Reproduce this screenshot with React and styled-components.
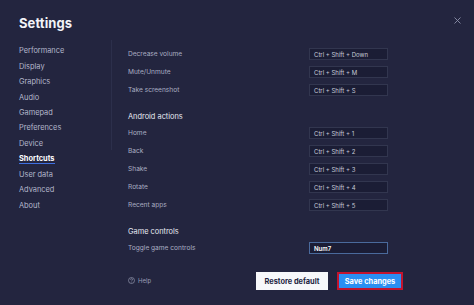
import React from "react";
import styled, { createGlobalStyle } from "styled-components";

const Global = createGlobalStyle`
  html, body { margin: 0; padding: 0; background: #23253f; }
  body { font-family: Inter, "Noto Sans", sans-serif; -webkit-font-smoothing: antialiased; }
`;

const Page = styled.div`
  width: 474px;
  height: 305px;
  background: #23253f;
  display: flex;
  flex-direction: column;
  overflow: hidden;
`;

const Header = styled.div`
  height: 40px;
  display: flex;
  align-items: center;
  justify-content: space-between;
  padding: 0 13px 0 19px;
  box-sizing: border-box;
`;

const Title = styled.h1`
  margin: 0;
  margin-top: 6px;
  font-size: 13px;
  font-weight: 700;
  color: #f2f3f8;
  letter-spacing: 0.1px;
`;

const Close = styled.button`
  background: none;
  border: 0;
  padding: 0;
  width: 8px;
  height: 8px;
  margin-top: 1px;
  display: flex;
  align-items: center;
  justify-content: center;
`;

const Body = styled.div`
  height: 232px;
  display: flex;
`;

const Sidebar = styled.nav`
  width: 111px;
  box-sizing: border-box;
  padding: 3px 0 0 19px;
  display: flex;
  flex-direction: column;
`;

const NavItem = styled.div`
  height: 15.45px;
  display: flex;
  align-items: center;
  font-size: 7.4px;
  color: ${(p) => (p.$active ? "#ffffff" : "#b4b8cc")};
  font-weight: ${(p) => (p.$active ? 700 : 400)};
`;

const NavLabel = styled.span`
  position: relative;
  padding-bottom: ${(p) => (p.$active ? "0" : "0")};
  border-bottom: ${(p) => (p.$active ? "1px solid #3f6fe0" : "none")};
  line-height: 9px;
`;

const Track = styled.div`
  width: 1px;
  height: 110px;
  background: #2c2f4b;
  align-self: flex-start;
`;

const Content = styled.div`
  width: 260px;
  padding: 5px 0 0 16px;
  display: flex;
  flex-direction: column;
`;

const Row = styled.div`
  height: 18px;
  display: flex;
  align-items: center;
  justify-content: space-between;
`;

const Label = styled.span`
  font-size: 6.6px;
  color: #a9adc2;
`;

const Heading = styled.div`
  height: 16px;
  margin-top: 9px;
  display: flex;
  align-items: center;
  font-size: 7.4px;
  color: #e8eaf2;
`;

const KeyBox = styled.div`
  width: 79px;
  height: 12px;
  box-sizing: border-box;
  border: 1px solid ${(p) => (p.$focus ? "#4a6a9c" : "#32364f")};
  background: #1b1d35;
  display: flex;
  align-items: center;
  padding-left: 4px;
  font-size: 6px;
  color: ${(p) => (p.$focus ? "#ffffff" : "#c7cad8")};
  font-weight: ${(p) => (p.$focus ? 600 : 400)};
`;

const Footer = styled.div`
  height: 18px;
  display: flex;
  align-items: center;
  padding: 0 71px 0 128px;
`;

const Help = styled.div`
  display: flex;
  align-items: center;
  gap: 3px;
  font-size: 6px;
  color: #9a9fb6;
  margin-top: -2px;
`;

const Buttons = styled.div`
  margin-left: auto;
  display: flex;
  gap: 9px;
`;

const Button = styled.button`
  height: 18px;
  box-sizing: border-box;
  border: ${(p) => (p.$primary ? "2px solid #c2142e" : "0")};
  background: ${(p) => (p.$primary ? "#2a8ff2" : "#f7f8fa")};
  color: ${(p) => (p.$primary ? "#ffffff" : "#23253f")};
  font-family: Inter, sans-serif;
  font-weight: 700;
  font-size: 7.4px;
  padding: 0;
  width: ${(p) => p.$w}px;
  display: flex;
  align-items: center;
  justify-content: center;
`;

const nav = [
  "Performance",
  "Display",
  "Graphics",
  "Audio",
  "Gamepad",
  "Preferences",
  "Device",
  "Shortcuts",
  "User data",
  "Advanced",
  "About",
];

const top = [
  ["Decrease volume", "Ctrl + Shift + Down"],
  ["Mute/Unmute", "Ctrl + Shift + M"],
  ["Take screenshot", "Ctrl + Shift + S"],
];

const android = [
  ["Home", "Ctrl + Shift + 1"],
  ["Back", "Ctrl + Shift + 2"],
  ["Shake", "Ctrl + Shift + 3"],
  ["Rotate", "Ctrl + Shift + 4"],
  ["Recent apps", "Ctrl + Shift + 5"],
];

const Shortcut = ({ label, keys, focus }) => (
  <Row>
    <Label>{label}</Label>
    <KeyBox $focus={focus}>{keys}</KeyBox>
  </Row>
);

export default function App() {
  return (
    <Page>
      <Global />
      <Header>
        <Title>Settings</Title>
        <Close aria-label="Close">
          <svg width="7" height="7" viewBox="0 0 7 7">
            <path d="M0.5 0.5 L6.5 6.5 M6.5 0.5 L0.5 6.5" stroke="#8c91aa" strokeWidth="0.9" />
          </svg>
        </Close>
      </Header>
      <Body>
        <Sidebar>
          {nav.map((n) => (
            <NavItem key={n} $active={n === "Shortcuts"}>
              <NavLabel $active={n === "Shortcuts"}>{n}</NavLabel>
            </NavItem>
          ))}
        </Sidebar>
        <Track />
        <Content>
          {top.map(([l, k]) => (
            <Shortcut key={l} label={l} keys={k} />
          ))}
          <Heading>Android actions</Heading>
          {android.map(([l, k]) => (
            <Shortcut key={l} label={l} keys={k} />
          ))}
          <Heading>Game controls</Heading>
          <Shortcut label="Toggle game controls" keys="Num7" focus />
        </Content>
      </Body>
      <Footer>
        <Help>
          <svg width="7" height="7" viewBox="0 0 14 14">
            <circle cx="7" cy="7" r="6" fill="none" stroke="#9a9fb6" strokeWidth="1.3" />
            <path d="M5.2 5.4a1.9 1.9 0 1 1 2.6 1.7c-.6.3-.8.6-.8 1.2" fill="none" stroke="#9a9fb6" strokeWidth="1.3" />
            <circle cx="7" cy="10.2" r="0.8" fill="#9a9fb6" />
          </svg>
          Help
        </Help>
        <Buttons>
          <Button $w={72}>Restore default</Button>
          <Button $primary $w={66}>Save changes</Button>
        </Buttons>
      </Footer>
    </Page>
  );
}
